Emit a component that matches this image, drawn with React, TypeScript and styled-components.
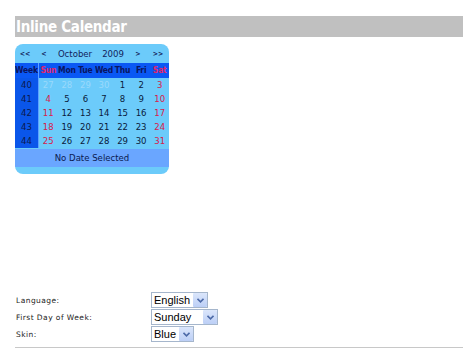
import * as React from 'react';
import styled, { createGlobalStyle } from 'styled-components';

const GlobalStyle = createGlobalStyle`
  html, body { margin: 0; padding: 0; background: #fff; }
  body { font-family: "DejaVu Sans Condensed", "DejaVu Sans", sans-serif; }
`;

const Page = styled.div`
  width: 474px;
  height: 354px;
  padding: 16px 11px 0 15px;
  box-sizing: border-box;
  display: flex;
  flex-direction: column;
`;

const TitleBar = styled.h1`
  margin: 0;
  height: 21px;
  background: #c0c0c0;
  color: #fff;
  font-family: "DejaVu Sans Condensed", "DejaVu Sans", sans-serif;
  font-size: 15px;
  font-weight: bold;
  line-height: 22px;
  padding-left: 1px;
  letter-spacing: -0.3px;
`;

const Calendar = styled.div`
  margin-top: 7px;
  width: 154px;
  background: #6ccbfa;
  border-radius: 8px;
  overflow: hidden;
  font-family: "DejaVu Sans Condensed", "DejaVu Sans", sans-serif;
  font-size: 9.5px;
  color: #0a1a44;
  padding-bottom: 7px;
`;

const NavRow = styled.div`
  height: 19px;
  display: flex;
  align-items: center;
  color: #12235c;
`;

const NavCell = styled.span<{ $w: number }>`
  width: ${p => p.$w}px;
  text-align: center;
  font-size: ${p => (p.$w > 30 ? 9.5 : 7)}px;
  font-weight: ${p => (p.$w > 30 ? 'normal' : 'bold')};
`;

const Grid = styled.div`
  display: grid;
  grid-template-columns: 24px repeat(7, 1fr);
`;

const HeadCell = styled.div<{ $weekend?: boolean; $week?: boolean }>`
  height: 15px;
  line-height: 15px;
  text-align: center;
  background: #0a58f4;
  color: ${p => (p.$weekend ? '#e2246a' : '#0a1560')};
  font-weight: bold;
  font-size: 8.5px;
  letter-spacing: -0.2px;
  white-space: nowrap;
  overflow: hidden;
  border-right: ${p => (p.$week ? '1px solid #5ea0ff' : 'none')};
`;

const WeekCell = styled.div`
  height: 14px;
  line-height: 14px;
  text-align: center;
  background: #0a56ea;
  color: #0a1a50;
  border-right: 1px solid #5ea0ff;
`;

const DayCell = styled.div<{ $kind: 'normal' | 'weekend' | 'other' }>`
  height: 14px;
  line-height: 14px;
  text-align: center;
  color: ${p =>
    p.$kind === 'weekend' ? '#d8204a' : p.$kind === 'other' ? '#9ad9fb' : '#0a1a3a'};
`;

const Footer = styled.div`
  height: 18px;
  line-height: 18px;
  text-align: center;
  background: #6aa6ff;
  color: #0a1a50;
  font-size: 9.5px;
  margin-top: 1px;
`;

const Spacer = styled.div`
  flex: 1;
`;

const Form = styled.div`
  display: grid;
  grid-template-columns: 136px auto;
  row-gap: 1px;
  align-items: center;
  padding-bottom: 5px;
  border-bottom: 1px solid #c8c8c8;
  margin-bottom: 6px;
`;

const Label = styled.span`
  font-family: "DejaVu Sans", Verdana, sans-serif;
  font-size: 7.5px;
  color: #222;
  padding-left: 1px;
  letter-spacing: 0.45px;
`;

const SelectBox = styled.div<{ $w: number }>`
  width: ${p => p.$w}px;
  height: 16px;
  box-sizing: border-box;
  border: 1px solid #a5b6cc;
  display: flex;
  align-items: center;
  background: #fff;
`;

const SelectText = styled.span`
  flex: 1;
  font-family: "Liberation Sans", Arial, sans-serif;
  font-size: 11px;
  color: #000;
  padding-left: 2px;
  line-height: 14px;
  white-space: nowrap;
  overflow: hidden;
`;

const SelectButton = styled.span`
  width: 14px;
  height: 14px;
  background: linear-gradient(#dbe6fb, #bccff6);
  border-radius: 1px;
  display: flex;
  align-items: center;
  justify-content: center;
`;

const Chevron = () => (
  <svg width="7" height="5" viewBox="0 0 7 5">
    <path d="M0.5 0.8 L3.5 3.8 L6.5 0.8" fill="none" stroke="#4d6aa8" strokeWidth="1.6" />
  </svg>
);

const Select = ({ value, w }: { value: string; w: number }) => (
  <SelectBox $w={w}>
    <SelectText>{value}</SelectText>
    <SelectButton>
      <Chevron />
    </SelectButton>
  </SelectBox>
);

const dayNames = ['Sun', 'Mon', 'Tue', 'Wed', 'Thu', 'Fri', 'Sat'];

const weeks: { no: number; days: number[] }[] = [
  { no: 40, days: [27, 28, 29, 30, 1, 2, 3] },
  { no: 41, days: [4, 5, 6, 7, 8, 9, 10] },
  { no: 42, days: [11, 12, 13, 14, 15, 16, 17] },
  { no: 43, days: [18, 19, 20, 21, 22, 23, 24] },
  { no: 44, days: [25, 26, 27, 28, 29, 30, 31] },
];

class App extends React.Component {
  render() {
    return (
      <Page>
        <GlobalStyle />
        <TitleBar>Inline Calendar</TitleBar>
        <Calendar>
          <NavRow>
            <NavCell $w={20}>&lt;&lt;</NavCell>
            <NavCell $w={18}>&lt;</NavCell>
            <NavCell $w={44}>October</NavCell>
            <NavCell $w={32}>2009</NavCell>
            <NavCell $w={18}>&gt;</NavCell>
            <NavCell $w={22}>&gt;&gt;</NavCell>
          </NavRow>
          <Grid>
            <HeadCell $week>Week</HeadCell>
            {dayNames.map((d, i) => (
              <HeadCell key={d} $weekend={i === 0 || i === 6}>
                {d}
              </HeadCell>
            ))}
            {weeks.map((w, wi) => (
              <React.Fragment key={w.no}>
                <WeekCell>{w.no}</WeekCell>
                {w.days.map((d, i) => (
                  <DayCell
                    key={i}
                    $kind={wi === 0 && d > 7 ? 'other' : i === 0 || i === 6 ? 'weekend' : 'normal'}
                  >
                    {d}
                  </DayCell>
                ))}
              </React.Fragment>
            ))}
          </Grid>
          <Footer>No Date Selected</Footer>
        </Calendar>
        <Spacer />
        <Form>
          <Label>Language:</Label>
          <Select value="English" w={57} />
          <Label>First Day of Week:</Label>
          <Select value="Sunday" w={67} />
          <Label>Skin:</Label>
          <Select value="Blue" w={43} />
        </Form>
      </Page>
    );
  }
}

export default App;
